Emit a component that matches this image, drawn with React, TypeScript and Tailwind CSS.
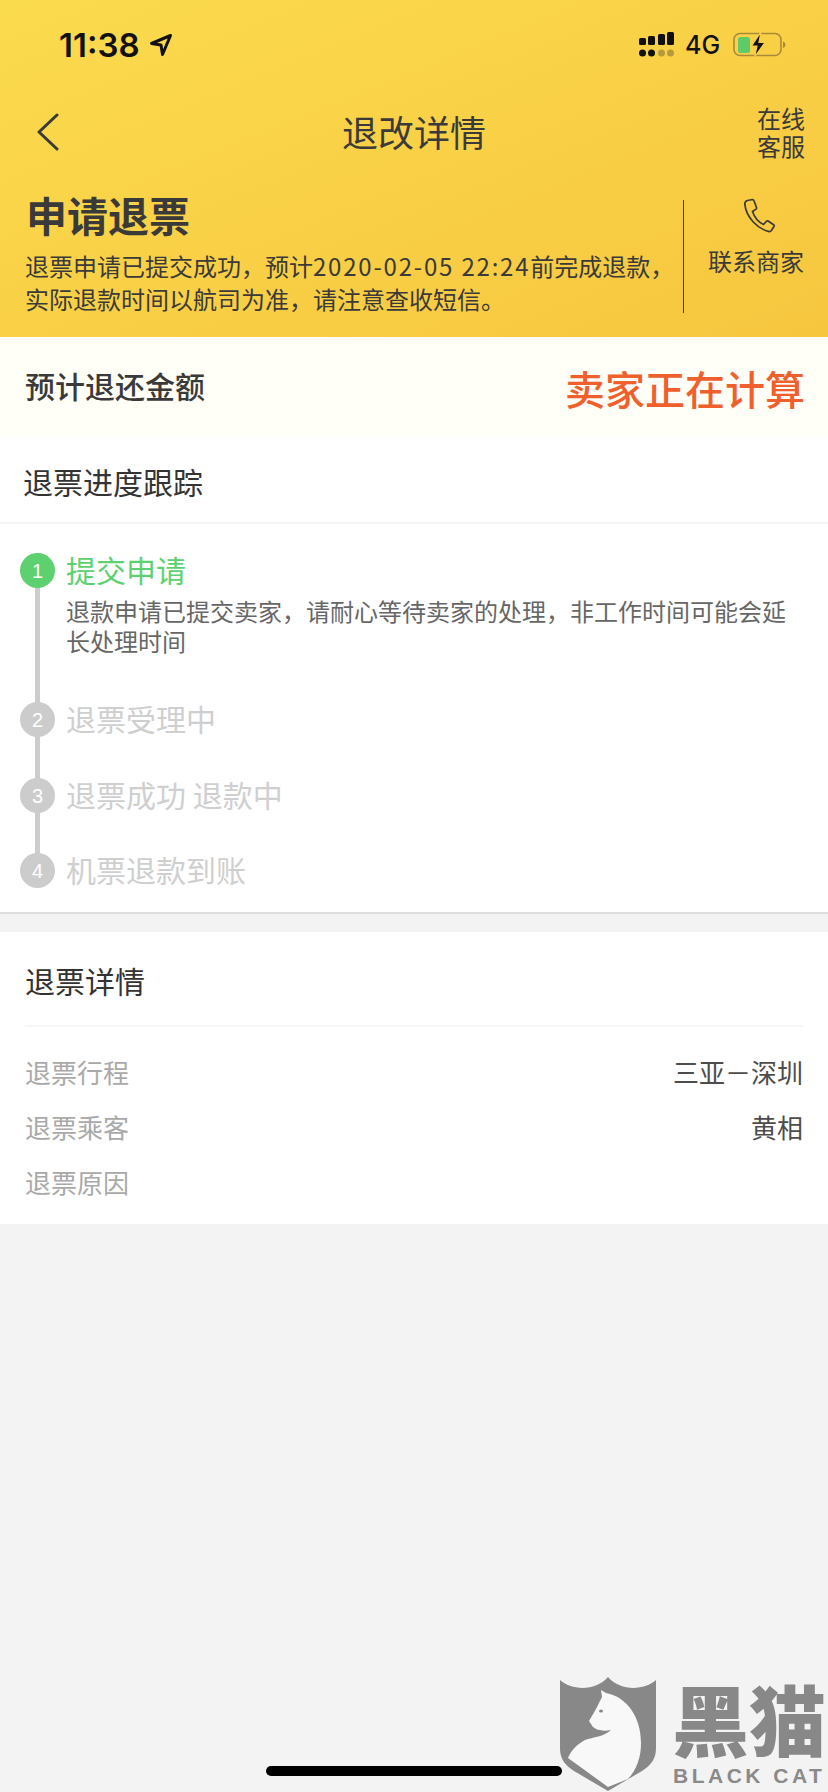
import React from "react";

const font = { fontFamily: '"Noto Sans CJK SC", sans-serif' };

function StatusIcons() {
  return (
    <svg width="147" height="26" viewBox="0 0 147 26" className="block">
      <g fill="#111">
        <rect x="0" y="6" width="7" height="7" rx="1.5" />
        <rect x="9" y="4" width="7" height="9" rx="1.5" />
        <rect x="19" y="2" width="7" height="11" rx="1.5" />
        <rect x="28" y="0" width="7" height="13" rx="1.5" />
        <circle cx="3.500" cy="21" r="3.500" />
        <circle cx="12.500" cy="21" r="3.500" />
      </g>
      <circle cx="22.500" cy="21" r="3.500" fill="#b59a3c" />
      <circle cx="31.500" cy="21" r="3.500" fill="#b59a3c" />
      <rect x="95" y="1.500" width="47" height="22" rx="6" fill="none" stroke="#a98a38" strokeWidth="1.600" />
      <rect x="99" y="5" width="12" height="16" rx="2.500" fill="#5ecb6b" />
      <path d="M144 9.500c1.600.6 2.400 1.800 2.400 3.200s-.8 2.600-2.400 3.200z" fill="#a98a38" />
      <path d="M122 0 112.500 14h5.500l-2.500 11L126 10.500h-6z" fill="#111" stroke="#f8cf45" strokeWidth="1.200" />
    </svg>
  );
}

function Step({ n, title, active, last, children, pad }: { n: number; title: string; active?: boolean; last?: boolean; children?: React.ReactNode; pad: string }) {
  return (
    <div className={`relative flex gap-[11px] pl-5 pr-[35px] ${pad}`}>
      {!last && <div className="absolute left-[35px] top-[30px] bottom-[-8px] w-[5px] bg-[#cccccc]" />}
      <div
        className={`relative z-10 flex h-[35px] w-[35px] shrink-0 items-center justify-center rounded-full text-[20px] leading-none text-white ${active ? "bg-[#5dd16f]" : "bg-[#cccccc]"}`}
        style={{ fontFamily: '"Liberation Sans", sans-serif' }}
      >
        {n}
      </div>
      <div className="min-w-0 flex-1">
        <div className={`h-[35px] text-[30px] leading-[33px] ${active ? "text-[#5dd16f]" : "text-[#cfcfcf]"}`}>{title}</div>
        {children}
      </div>
    </div>
  );
}

function Row({ label, value }: { label: string; value?: string }) {
  return (
    <div className="flex h-[55px] items-center justify-between text-[26px] leading-none">
      <span className="text-[#a9a9a9]">{label}</span>
      {value && <span className="text-[#4d4d4d]">{value}</span>}
    </div>
  );
}

export default function App() {
  return (
    <div className="relative flex min-h-[1792px] w-[828px] flex-col overflow-hidden bg-[#f3f3f3]" style={font}>
      <header className="h-[337px] bg-gradient-to-br from-[#fbdb4e] via-[#f9d046] to-[#f6c63f] text-[#3a3a3a]">
        <div className="flex h-[90px] items-center justify-between pl-[59px] pr-[42px] text-[#111]">
          <div className="flex items-center gap-[9px]">
            <span className="text-[33px] font-semibold leading-none" style={{ fontFamily: "Inter, sans-serif" }}>11:38</span>
            <svg width="24" height="24" viewBox="0 0 24 24" fill="none" stroke="#111" strokeWidth="3" strokeLinejoin="round">
              <path d="M21.500 2.500 2.500 10.500l9.500 1.500 1.500 9.500z" />
            </svg>
          </div>
          <div className="relative h-[26px] w-[147px]">
            <StatusIcons />
            <span className="absolute left-[46px] top-0 text-[25px] font-medium leading-[26px]" style={{ fontFamily: "Inter, sans-serif" }}>4G</span>
          </div>
        </div>

        <nav className="relative flex h-[84px] items-center justify-center pb-[2px]">
          <svg className="absolute left-[36px] top-[23px]" width="24" height="38" viewBox="0 0 24 38" fill="none" stroke="#3a3a3a" strokeWidth="3" strokeLinecap="round" strokeLinejoin="round">
            <path d="M21 2 3 19l18 17" />
          </svg>
          <h1 className="text-[36px] font-normal leading-none">退改详情</h1>
          <div className="absolute right-[23px] top-[14px] w-[48px] text-center text-[24px] leading-[28px]">在线客服</div>
        </nav>

        <div className="mt-[26px] flex">
          <div className="w-[658px] shrink-0 pl-[25px]">
            <div className="mt-[-10px] pl-[1px] text-[41px] font-bold leading-[48px]">申请退票</div>
            <p className="mt-[11px] whitespace-nowrap text-[24px] leading-[33px]">
              退票申请已提交成功，预计<span className="tracking-[1.800px]">2020-02-05 22:24</span>前完成退款，
              <br />
              实际退款时间以航司为准，请注意查收短信。
            </p>
          </div>
          <div className="ml-[25px] h-[113px] w-px shrink-0 bg-[#3a3a3a]" />
          <div className="flex flex-1 flex-col items-center">
            <svg className="ml-[8px] mt-[-2px]" width="36" height="36" viewBox="0 0 36 36" fill="none" stroke="#3a3a3a" strokeWidth="1.700" strokeLinejoin="round">
              <path d="M5.500 2.500 10.500 1.500c.8 0 1.200.4 1.400 1l2.600 7c.2.6 0 1.200-.5 1.600l-3.500 2.400c1.800 5.500 5.800 10.500 11 13l3-3.300c.5-.4 1.100-.5 1.600-.2l5.500 3.800c.6.4.7 1.100.4 1.700l-2.800 4.300c-.5.6-1.200.9-2 .8C15.500 31 4 19 2.800 6.200 2.700 4.500 3.500 3 5.500 2.500z" />
            </svg>
            <div className="mt-[10px] whitespace-nowrap text-[24px] leading-[34px]">联系商家</div>
          </div>
        </div>
      </header>

      <section className="flex h-[99px] items-center justify-between bg-[#fffef7] pl-[25px] pr-[23px]">
        <span className="mb-[4px] text-[30px] font-medium leading-none text-[#3a3a3a]">预计退还金额</span>
        <span className="mt-[2px] text-[40px] font-medium leading-none text-[#f0602c]">卖家正在计算</span>
      </section>

      <section className="border-b-2 border-[#dedede] bg-white pb-[24px]">
        <div className="flex h-[88px] items-center border-b-2 border-[#f4f4f4] pl-[23px] pt-[4px] text-[30px] leading-none text-[#333333]">退票进度跟踪</div>
        <div className="pt-[29px]">
          <Step n={1} title="提交申请" active pad="h-[149px]">
            <p className="mt-[8px] text-[24px] leading-[30px] text-[#666666]">退款申请已提交卖家，请耐心等待卖家的处理，非工作时间可能会延长处理时间</p>
          </Step>
          <Step n={2} title="退票受理中" pad="h-[76px]" />
          <Step n={3} title="退票成功 退款中" pad="h-[75px]" />
          <Step n={4} title="机票退款到账" last pad="h-[35px]" />
        </div>
      </section>

      <section className="mt-[18px] bg-white px-[25px] pb-[15px]">
        <div className="flex h-[95px] items-center border-b-2 border-[#f6f6f6] pt-[3px] text-[30px] leading-none text-[#333333]">退票详情</div>
        <div className="pt-[17px]">
          <Row label="退票行程" value="三亚－深圳" />
          <Row label="退票乘客" value="黄相" />
          <Row label="退票原因" />
        </div>
      </section>

      <div className="absolute bottom-[16px] left-[266px] h-[10px] w-[296px] rounded-full bg-black" />

      <svg className="absolute left-[559px] top-[1677px]" width="98" height="114" viewBox="0 0 98 114">
        <path d="M1 3C12 13 36 15 49 0c13 15 37 13 48 3v68c0 11-5 17-14 23L49 114 15 94C6 88 1 82 1 71z" fill="#888888" />
        <path d="M42 13l5 3C68 20 82 40 82 66c0 14-4 26-13 36L49 110 9 81c2-6 9-14 17-18 8-3 19-3 26-10-4 1-8 1-11 0-3 0-5-2-7-3l-4-6 7-12 6-12z" fill="#f8f8f8" />
        <ellipse cx="42" cy="34" rx="2" ry="1.500" fill="#888888" />
      </svg>
      <div className="absolute left-[672px] top-[1678px] whitespace-nowrap text-[77px] font-black leading-[80px] text-[#888888]">黑猫</div>
      <div className="absolute left-[673px] top-[1764px] whitespace-nowrap text-[21px] font-bold leading-[24px] tracking-[3.500px] text-[#8a8a8a]" style={{ fontFamily: '"Liberation Sans", sans-serif' }}>BLACK CAT</div>
    </div>
  );
}
